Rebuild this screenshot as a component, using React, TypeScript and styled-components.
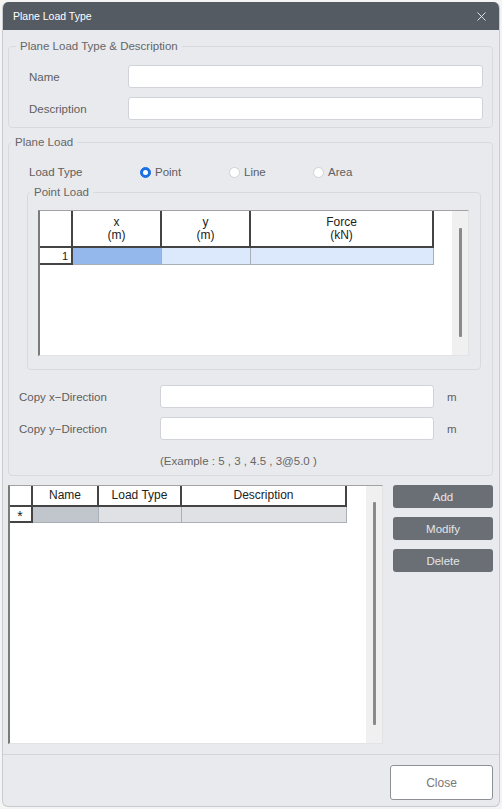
import React, { useState } from 'react';
import styled, { createGlobalStyle } from 'styled-components';
import { X } from 'lucide-react';

const GlobalStyles = createGlobalStyle`
    body {
        margin: 0;
        background: #f4f4f5;
        font-family: 'Liberation Sans', Arial, sans-serif;
        font-size: 11.5px;
        color: #5e5e5e;
    }
    * {
        box-sizing: border-box;
    }
`;

const Window = styled.div`
    margin: 2px 2px 0 2px;
    width: 498px;
    background: #e9eaee;
    border: 1px solid #c9cbcf;
    border-top: none;
    border-radius: 6px;
    overflow: hidden;
    display: flex;
    flex-direction: column;
`;

const TitleBar = styled.div`
    height: 28px;
    background: #555b63;
    color: #fff;
    font-size: 10.5px;
    display: flex;
    align-items: center;
    justify-content: space-between;
    padding: 0 10px 0 10px;
`;

const Body = styled.div`
    padding: 0 6px 0 5px;
    display: flex;
    flex-direction: column;
`;

const Group = styled.fieldset<{ $top: number; $legendLeft: number }>`
    margin: ${(p) => p.$top}px 0 0 0;
    padding: 0;
    border: 1px solid #d8dade;
    border-radius: 4px;
    min-inline-size: 0;

    & > legend {
        margin-left: ${(p) => p.$legendLeft}px;
        padding: 0 4px;
        line-height: 14px;
        font-size: 11.5px;
        color: #666;
    }
`;

const GroupContent = styled.div<{ $pad: string }>`
    padding: ${(p) => p.$pad};
    display: flex;
    flex-direction: column;
`;

const FieldRow = styled.div<{ $label: number }>`
    display: grid;
    grid-template-columns: ${(p) => p.$label}px 1fr;
    align-items: center;
    height: 23px;
    & + & {
        margin-top: 9px;
    }
`;

const CopyRow = styled.div`
    display: grid;
    grid-template-columns: 141px 274px auto;
    align-items: center;
    height: 23px;
    & + & {
        margin-top: 9px;
    }
`;

const Label = styled.span`
    color: #5e5e5e;
    white-space: nowrap;
`;

const Unit = styled(Label)`
    margin-left: 13px;
`;

const TextBox = styled.input`
    height: 23px;
    width: 100%;
    border: 1px solid #d0d3d7;
    border-radius: 3px;
    background: #fff;
    outline: none;
`;

const RadioRow = styled.div`
    display: grid;
    grid-template-columns: 111px 89px 84px auto;
    align-items: center;
    height: 16px;
    padding-left: 10px;
`;

const RadioItem = styled.label`
    display: flex;
    align-items: center;
    gap: 4px;
    color: #5e5e5e;
    cursor: pointer;
`;

const RadioDot = styled.span<{ $on: boolean }>`
    width: 11px;
    height: 11px;
    border-radius: 50%;
    display: inline-flex;
    align-items: center;
    justify-content: center;
    background: ${(p) => (p.$on ? '#1a6fe6' : '#fff')};
    border: 1px solid ${(p) => (p.$on ? '#1a6fe6' : '#cfd1d4')};
    &::after {
        content: '';
        width: 5px;
        height: 5px;
        border-radius: 50%;
        background: ${(p) => (p.$on ? '#fff' : 'transparent')};
    }
`;

const GridFrame = styled.div<{ $height: number; $width?: number }>`
    height: ${(p) => p.$height}px;
    width: ${(p) => (p.$width ? `${p.$width}px` : 'auto')};
    display: flex;
    background: #fff;
    border-top: 1px solid #a3a3a3;
    border-left: 2px solid #7a7a7a;
    border-right: 1px solid #e2e3e6;
    border-bottom: 1px solid #e2e3e6;
`;

const GridArea = styled.div`
    flex: 1;
`;

const ScrollTrack = styled.div<{ $top: number; $bottom: number }>`
    width: 16px;
    background: #f0f0f0;
    display: flex;
    justify-content: center;
    padding: ${(p) => p.$top}px 0 ${(p) => p.$bottom}px 0;
`;

const ScrollThumb = styled.div`
    width: 3px;
    background: #8a8a8a;
    border-radius: 1px;
`;

const Table = styled.div<{ $cols: string }>`
    display: grid;
    grid-template-columns: ${(p) => p.$cols};
    width: max-content;
`;

const HeadCell = styled.div<{ $height: number }>`
    height: ${(p) => p.$height}px;
    background: #fff;
    border-right: 2px solid #444;
    border-bottom: 2px solid #444;
    color: #222;
    font-size: 12px;
    line-height: 13px;
    display: flex;
    flex-direction: column;
    align-items: center;
    justify-content: center;
    text-align: center;
`;

const RowHead = styled.div<{ $height: number; $align: string }>`
    height: ${(p) => p.$height}px;
    background: #fff;
    border-right: 2px solid #444;
    border-bottom: 2px solid #444;
    color: #222;
    font-size: 11px;
    display: flex;
    align-items: center;
    justify-content: ${(p) => p.$align};
    padding-right: 3px;
`;

const Star = styled.span`
    font-size: 14px;
    line-height: 14px;
    padding-top: 4px;
    padding-left: 2px;
`;

const DataCell = styled.div<{ $height: number; $bg: string }>`
    height: ${(p) => p.$height}px;
    background: ${(p) => p.$bg};
    border-right: 1px solid #a9afb8;
    border-bottom: 1px solid #a9afb8;
`;

const Hint = styled.div`
    margin-top: 14px;
    padding-left: 141px;
    line-height: 14px;
    color: #666;
`;

const BottomArea = styled.div`
    margin-top: 9px;
    display: flex;
    gap: 10px;
`;

const ButtonColumn = styled.div`
    width: 100px;
    display: flex;
    flex-direction: column;
    gap: 9px;
`;

const ActionButton = styled.button`
    height: 23px;
    border: none;
    border-radius: 3px;
    background: #6a6f76;
    color: #e4e5e7;
    font-family: inherit;
    font-size: 11.5px;
    cursor: pointer;
`;

const Footer = styled.div`
    margin-top: 10px;
    border-top: 1px solid #d3d5d9;
    padding: 10px 6px 6px 0;
    display: flex;
    justify-content: flex-end;
`;

const CloseButton = styled.button`
    width: 103px;
    height: 35px;
    background: #fff;
    border: 1px solid #8d9095;
    border-radius: 3px;
    color: #777;
    font-family: inherit;
    font-size: 12px;
    cursor: pointer;
`;

const loadTypes = ['Point', 'Line', 'Area'];

const App: React.FC = () => {
    const [loadType, setLoadType] = useState('Point');

    return (
        <>
            <GlobalStyles />
            <Window>
                <TitleBar>
                    <span>Plane Load Type</span>
                    <X size={15} strokeWidth={1.4} color="#f2f2f2" />
                </TitleBar>
                <Body>
                    <Group $top={9} $legendLeft={7}>
                        <legend>Plane Load Type &amp; Description</legend>
                        <GroupContent $pad="12px 9px 7px 20px">
                            <FieldRow $label={99}>
                                <Label>Name</Label>
                                <TextBox />
                            </FieldRow>
                            <FieldRow $label={99}>
                                <Label>Description</Label>
                                <TextBox />
                            </FieldRow>
                        </GroupContent>
                    </Group>

                    <Group $top={7} $legendLeft={2}>
                        <legend>Plane Load</legend>
                        <GroupContent $pad="15px 11px 7px 10px">
                            <RadioRow>
                                <Label>Load Type</Label>
                                {loadTypes.map((t) => (
                                    <RadioItem
                                        key={t}
                                        onClick={() => setLoadType(t)}
                                    >
                                        <RadioDot $on={loadType === t} />
                                        {t}
                                    </RadioItem>
                                ))}
                            </RadioRow>

                            <Group
                                $top={5}
                                $legendLeft={2}
                                style={{ marginLeft: 8 }}
                            >
                                <legend>Point Load</legend>
                                <GroupContent $pad="11px 11px 13px 10px">
                                    <GridFrame $height={146}>
                                        <GridArea>
                                            <Table $cols="33px 89px 89px 183px">
                                                <HeadCell $height={37} />
                                                <HeadCell $height={37}>
                                                    <span>x</span>
                                                    <span>(m)</span>
                                                </HeadCell>
                                                <HeadCell $height={37}>
                                                    <span>y</span>
                                                    <span>(m)</span>
                                                </HeadCell>
                                                <HeadCell $height={37}>
                                                    <span>Force</span>
                                                    <span>(kN)</span>
                                                </HeadCell>
                                                <RowHead
                                                    $height={17}
                                                    $align="flex-end"
                                                >
                                                    1
                                                </RowHead>
                                                <DataCell
                                                    $height={17}
                                                    $bg="#94b8ec"
                                                />
                                                <DataCell
                                                    $height={17}
                                                    $bg="#dce8fb"
                                                />
                                                <DataCell
                                                    $height={17}
                                                    $bg="#dce8fb"
                                                />
                                            </Table>
                                        </GridArea>
                                        <ScrollTrack $top={17} $bottom={18}>
                                            <ScrollThumb />
                                        </ScrollTrack>
                                    </GridFrame>
                                </GroupContent>
                            </Group>

                            <div style={{ marginTop: 15 }}>
                                <CopyRow>
                                    <Label>Copy x−Direction</Label>
                                    <TextBox />
                                    <Unit>m</Unit>
                                </CopyRow>
                                <CopyRow>
                                    <Label>Copy y−Direction</Label>
                                    <TextBox />
                                    <Unit>m</Unit>
                                </CopyRow>
                            </div>
                            <Hint>(Example : 5 , 3 , 4.5 , 3@5.0 )</Hint>
                        </GroupContent>
                    </Group>

                    <BottomArea>
                        <GridFrame $height={259} $width={375}>
                            <GridArea>
                                <Table $cols="23px 66px 83px 165px">
                                    <HeadCell $height={21} />
                                    <HeadCell $height={21}>Name</HeadCell>
                                    <HeadCell $height={21}>Load Type</HeadCell>
                                    <HeadCell $height={21}>
                                        Description
                                    </HeadCell>
                                    <RowHead $height={16} $align="center">
                                        <Star>*</Star>
                                    </RowHead>
                                    <DataCell $height={16} $bg="#c1c6cc" />
                                    <DataCell $height={16} $bg="#dfe1e5" />
                                    <DataCell $height={16} $bg="#dfe1e5" />
                                </Table>
                            </GridArea>
                            <ScrollTrack $top={16} $bottom={18}>
                                <ScrollThumb />
                            </ScrollTrack>
                        </GridFrame>
                        <ButtonColumn>
                            <ActionButton>Add</ActionButton>
                            <ActionButton>Modify</ActionButton>
                            <ActionButton>Delete</ActionButton>
                        </ButtonColumn>
                    </BottomArea>
                </Body>
                <Footer>
                    <CloseButton>Close</CloseButton>
                </Footer>
            </Window>
        </>
    );
};

export default App;
